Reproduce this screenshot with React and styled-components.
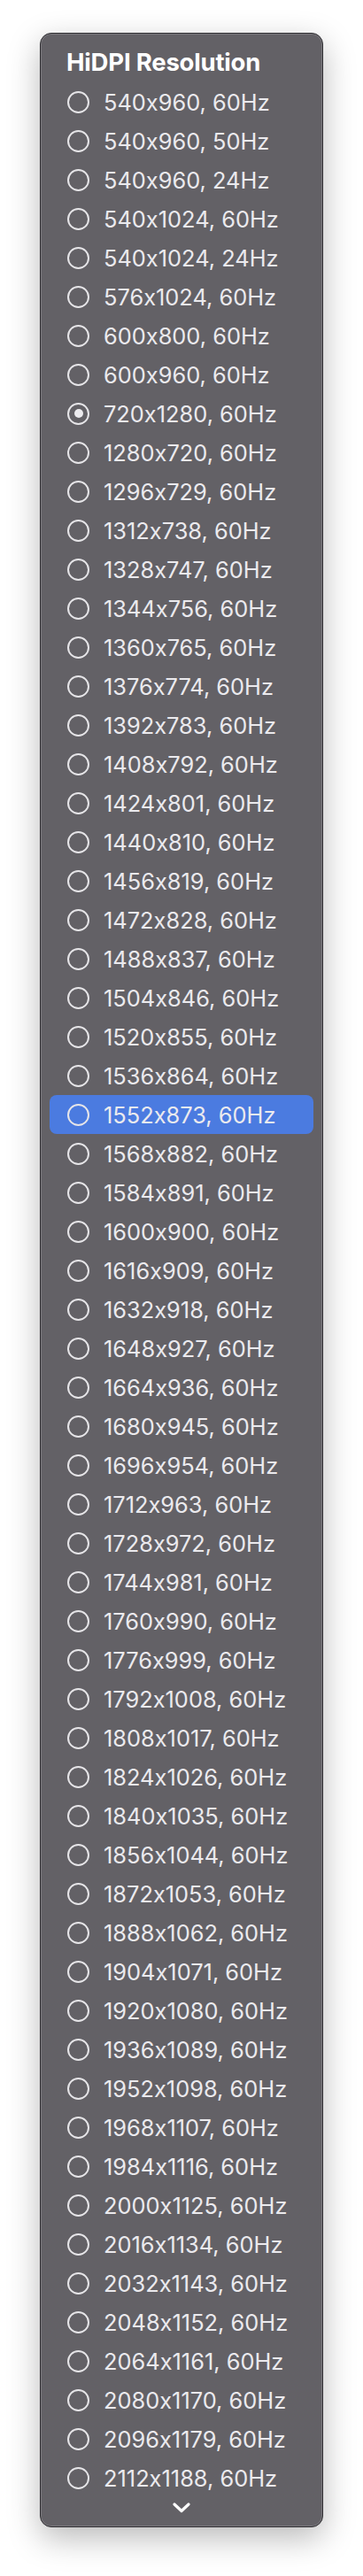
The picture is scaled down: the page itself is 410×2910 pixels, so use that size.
import styled, { createGlobalStyle } from 'styled-components'

const Global = createGlobalStyle`
  body {
    margin: 0;
    background: #ffffff;
    font-family: Inter, "Noto Sans", "Liberation Sans", sans-serif;
    font-feature-settings: "calt" 0;
  }
`

const Page = styled.div`
  padding: 37px 45px 56px 45px;
`

const Menu = styled.div`
  width: 320px;
  box-sizing: border-box;
  background: #636166;
  border: 1px solid #2e2d31;
  box-shadow: inset 0 0 0 1px #7a787d, 0 12px 36px rgba(0, 0, 0, 0.28);
  border-radius: 13px;
  padding: 9px 10px 0 10px;
  display: flex;
  flex-direction: column;
`

const Title = styled.div`
  color: #ffffff;
  font-weight: 700;
  font-size: 27.5px;
  line-height: 46px;
  height: 46px;
  padding-left: 19px;
  letter-spacing: -0.2px;
`

const Row = styled.div`
  height: 44px;
  display: flex;
  align-items: center;
  padding-left: 20px;
  gap: 16px;
  border-radius: 8px;
  background: ${p => (p.$active ? '#4b7be0' : 'transparent')};
  color: #ebeaee;
  font-size: 25.4px;
  font-feature-settings: "calt" 0;
`

const Radio = styled.span`
  width: 25px;
  height: 25px;
  box-sizing: border-box;
  border-radius: 50%;
  border: 2px solid #e6e5e8;
  display: flex;
  align-items: center;
  justify-content: center;
  flex-shrink: 0;
  &::after {
    content: '';
    width: 10px;
    height: 10px;
    border-radius: 50%;
    background: #ecebee;
    display: ${p => (p.$checked ? 'block' : 'none')};
  }
`

const More = styled.div`
  height: 33px;
  display: flex;
  align-items: flex-start;
  justify-content: center;
  padding-top: 6px;
  box-sizing: border-box;
`

const first = [
  '540x960, 60Hz',
  '540x960, 50Hz',
  '540x960, 24Hz',
  '540x1024, 60Hz',
  '540x1024, 24Hz',
  '576x1024, 60Hz',
  '600x800, 60Hz',
  '600x960, 60Hz',
  '720x1280, 60Hz',
]

const modes = [...first]
for (let w = 1280; w <= 2112; w += 16) {
  modes.push(`${w}x${(w * 9) / 16}, 60Hz`)
}

const App = () => {
  return (
    <Page>
      <Global />
      <Menu>
        <Title>HiDPI Resolution</Title>
        {modes.map(m => (
          <Row key={m} $active={m === '1552x873, 60Hz'}>
            <Radio $checked={m === '720x1280, 60Hz'} />
            <span>{m}</span>
          </Row>
        ))}
        <More>
          <svg width="20" height="12" viewBox="0 0 20 12">
            <path d="M2 2 L10 9.5 L18 2" fill="none" stroke="#ffffff" strokeWidth="3.2" strokeLinecap="round" strokeLinejoin="round" />
          </svg>
        </More>
      </Menu>
    </Page>
  )
}

export default App
